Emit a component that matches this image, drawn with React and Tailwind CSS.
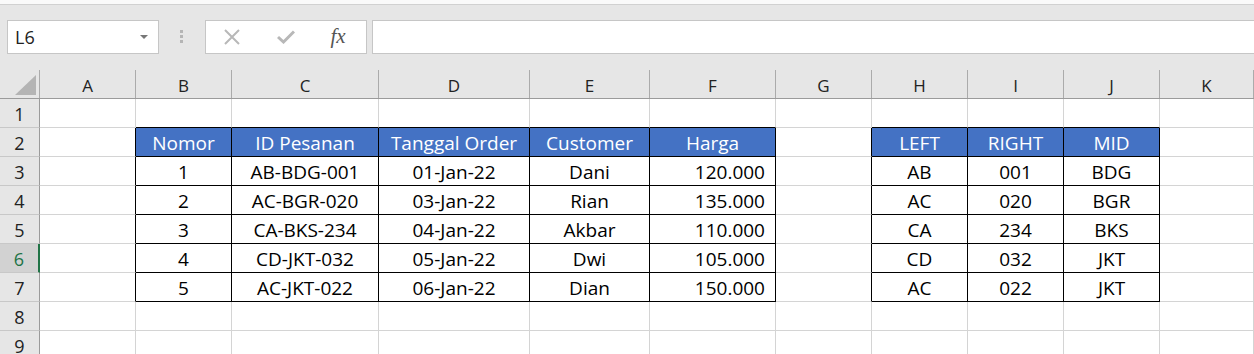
const cols = [
  { key: "A", w: "w-[96px]" },
  { key: "B", w: "w-[96px]" },
  { key: "C", w: "w-[147px]" },
  { key: "D", w: "w-[151px]" },
  { key: "E", w: "w-[120px]" },
  { key: "F", w: "w-[126px]" },
  { key: "G", w: "w-[96px]" },
  { key: "H", w: "w-[96px]" },
  { key: "I", w: "w-[96px]" },
  { key: "J", w: "w-[96px]" },
  { key: "K", w: "flex-1" },
];

const orders = [
  ["1", "AB-BDG-001", "01-Jan-22", "Dani", "120.000", "AB", "001", "BDG"],
  ["2", "AC-BGR-020", "03-Jan-22", "Rian", "135.000", "AC", "020", "BGR"],
  ["3", "CA-BKS-234", "04-Jan-22", "Akbar", "110.000", "CA", "234", "BKS"],
  ["4", "CD-JKT-032", "05-Jan-22", "Dwi", "105.000", "CD", "032", "JKT"],
  ["5", "AC-JKT-022", "06-Jan-22", "Dian", "150.000", "AC", "022", "JKT"],
];

// builds the cell map for rows 1..9
function cellFor(row, col) {
  const main = ["B", "C", "D", "E", "F"];
  const side = ["H", "I", "J"];
  if (row === 2) {
    const heads = { B: "Nomor", C: "ID Pesanan", D: "Tanggal Order", E: "Customer", F: "Harga", H: "LEFT", I: "RIGHT", J: "MID" };
    if (heads[col]) return { text: heads[col], head: true, box: true };
  }
  if (row >= 3 && row <= 7) {
    const r = orders[row - 3];
    if (main.includes(col)) {
      const i = main.indexOf(col);
      return { text: r[i], box: true, right: col === "F" };
    }
    if (side.includes(col)) return { text: r[5 + side.indexOf(col)], box: true };
  }
  return null;
}

function isBox(row, col) {
  return !!cellFor(row, col);
}

function Cell({ row, col, w }) {
  const c = cellFor(row, col.key);
  const idx = cols.findIndex((x) => x.key === col.key);
  const next = cols[idx + 1];
  const rightBlack = (c && c.box) || (next && isBox(row, next.key));
  const bottomBlack = (c && c.box) || isBox(row + 1, col.key);
  return (
    <div
      className={`${w} shrink-0 h-full flex items-center pt-[3px] border-r border-b whitespace-nowrap ${
        rightBlack ? "border-r-black" : "border-r-[#d4d4d4]"
      } ${bottomBlack ? "border-b-black" : "border-b-[#d4d4d4]"} ${
        c && c.head ? "bg-[#4472c4] text-white" : "bg-white text-black"
      } ${c && c.right ? "justify-end pr-[10px]" : "justify-center"}`}
    >
      {c ? c.text : ""}
    </div>
  );
}

export default function App() {
  const rows = [1, 2, 3, 4, 5, 6, 7, 8, 9];
  return (
    <div
      className="w-[1254px] h-[354px] overflow-hidden bg-[#e6e6e6] flex flex-col"
      style={{ fontFamily: '"Open Sans", "Noto Sans", sans-serif' }}
    >
      {/* ribbon remnant */}
      <div className="h-[5px] bg-[#fafafa] border-b border-[#d1d1d1] shrink-0" />

      {/* formula bar */}
      <div className="flex items-center h-[34px] mt-[15px] shrink-0">
        <div className="ml-[7px] w-[152px] h-full bg-white border border-[#c6c6c6] flex items-center justify-between pl-[7px] pr-[10px] text-[18px] text-[#222]">
          <span>L6</span>
          <svg width="8" height="5" viewBox="0 0 8 5">
            <polygon points="0,0 8,0 4,4" fill="#777" />
          </svg>
        </div>
        <div className="w-[46px] flex justify-center">
          <svg width="4" height="14" viewBox="0 0 4 14">
            <rect x="0" y="0" width="3" height="3" fill="#b5b5b5" />
            <rect x="0" y="5" width="3" height="3" fill="#b5b5b5" />
            <rect x="0" y="10" width="3" height="3" fill="#b5b5b5" />
          </svg>
        </div>
        <div className="w-[162px] h-full bg-white border border-[#c6c6c6] flex items-center">
          <div className="w-[52px] flex justify-center">
            <svg width="16" height="16" viewBox="0 0 16 16">
              <path d="M1 1 L15 15 M15 1 L1 15" stroke="#b8b8b8" strokeWidth="2" />
            </svg>
          </div>
          <div className="w-[56px] flex justify-center">
            <svg width="18" height="14" viewBox="0 0 18 14">
              <path d="M1 7 L6.5 12 L17 1.5" stroke="#b8b8b8" strokeWidth="3" fill="none" />
            </svg>
          </div>
          <div
            className="flex-1 flex justify-center text-[21px] italic text-[#555] pr-[4px]"
            style={{ fontFamily: '"Liberation Serif", serif' }}
          >
            fx
          </div>
        </div>
        <div className="ml-[5px] flex-1 h-full bg-white border-y border-l border-[#c6c6c6]" />
      </div>

      {/* column headers */}
      <div className="flex h-[29px] mt-[16px] shrink-0 border-b border-[#9b9b9b] text-[17px] text-[#222]">
        <div className="w-[40px] shrink-0 border-r border-[#ababab] flex items-end justify-end pr-[3px] pb-[3px]">
          <svg width="21" height="20" viewBox="0 0 21 20">
            <polygon points="21,0 21,20 0,20" fill="#b4b4b4" />
          </svg>
        </div>
        {cols.map((c) => (
          <div
            key={c.key}
            className={`${c.w} shrink-0 border-r border-[#ababab] flex items-center justify-center pt-[3px]`}
          >
            {c.key}
          </div>
        ))}
      </div>

      {/* rows */}
      <div className="flex flex-col text-[19px]">
        {rows.map((r) => (
          <div key={r} className="flex h-[29px] shrink-0">
            <div
              className={`w-[40px] shrink-0 h-full flex items-center justify-center pt-[3px] text-[18px] border-b border-b-[#c8c8c8] ${
                r === 6
                  ? "bg-[#d2d2d2] text-[#217346] border-r-2 border-r-[#217346]"
                  : "bg-[#e6e6e6] text-[#222] border-r border-r-[#9b9b9b]"
              }`}
            >
              {r}
            </div>
            {cols.map((c) => (
              <Cell key={c.key} row={r} col={c} w={c.w} />
            ))}
          </div>
        ))}
      </div>
    </div>
  );
}
